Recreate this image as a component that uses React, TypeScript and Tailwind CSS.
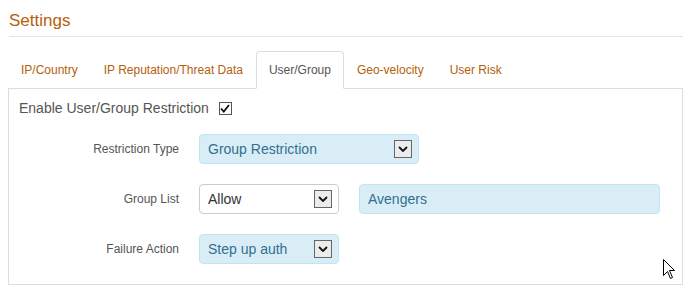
import React from 'react'

const tabs = ['IP/Country', 'IP Reputation/Threat Data', 'User/Group', 'Geo-velocity', 'User Risk']

function Arrow() {
  return (
    <span className="ml-auto flex h-[18px] w-[18px] items-center justify-center border border-[#666] bg-[#ececec]">
      <svg width="10" height="6" viewBox="0 0 10 6">
        <path d="M1 1 L5 5 L9 1" fill="none" stroke="#111" strokeWidth="1.8" />
      </svg>
    </span>
  )
}

function Select(props: { value: string; width: string; info?: boolean }) {
  return (
    <div
      className={`flex h-[30px] items-center rounded-[4px] border pl-2 pr-[6px] text-[14px] ${props.width} ${
        props.info ? 'border-[#bce8f1] bg-[#d9edf7] text-[#31708f]' : 'border-[#ccc] bg-white text-[#333]'
      }`}
    >
      <span>{props.value}</span>
      <Arrow />
    </div>
  )
}

function Row(props: { label: string; children: React.ReactNode }) {
  return (
    <div className="flex items-center">
      <div className="w-[160px] text-right text-[12px] text-[#555]">{props.label}</div>
      <div className="ml-[20px] flex items-center gap-[20px]">{props.children}</div>
    </div>
  )
}

export default function App() {
  return (
    <div className="relative h-[286px] w-[692px] bg-white pl-[8px] pr-[9px]" style={{ fontFamily: '"Liberation Sans", Arial, sans-serif' }}>
      <div className="ml-[1px] border-b border-[#e5e5e5] pb-[5px] pt-[11px] text-[17px] leading-[20px] text-[#b5600c]">
        Settings
      </div>

      <div className="mt-[14px] flex border-b border-[#ddd]">
        {tabs.map((t) => {
          const active = t === 'User/Group'
          return (
            <div
              key={t}
              className={`-mb-px flex h-[38px] items-center rounded-t-[4px] border px-[12px] text-[12px] ${
                active ? 'border-[#ddd] border-b-white bg-white text-[#555]' : 'border-transparent text-[#b5600c]'
              }`}
            >
              {t}
            </div>
          )
        })}
      </div>

      <div className="h-[196px] border-x border-b border-[#ddd] px-[10px] pt-[9px]">
        <div className="flex items-center text-[14px] leading-[20px] text-[#555]">
          Enable User/Group Restriction
          <span className="ml-[10px] flex h-[13px] w-[13px] items-center justify-center border border-[#555] bg-white">
            <svg width="10" height="9" viewBox="0 0 10 9">
              <path d="M1 4.5 L3.8 7.5 L9 1" fill="none" stroke="#111" strokeWidth="1.8" />
            </svg>
          </span>
        </div>

        <div className="mt-[16px] flex flex-col gap-[20px]">
          <Row label="Restriction Type">
            <Select value="Group Restriction" width="w-[220px]" info />
          </Row>
          <Row label="Group List">
            <Select value="Allow" width="w-[140px]" />
            <div className="flex h-[30px] w-[301px] items-center rounded-[4px] border border-[#bce8f1] bg-[#d9edf7] pl-2 text-[14px] text-[#31708f]">
              Avengers
            </div>
          </Row>
          <Row label="Failure Action">
            <Select value="Step up auth" width="w-[140px]" info />
          </Row>
        </div>
      </div>

      <svg className="absolute left-[663px] top-[259px]" width="13" height="21" viewBox="0 0 13 21">
        <path d="M0.5 0.5 L0.5 16.5 L4.5 12.5 L7.5 19.5 L9.5 18.5 L6.5 11.5 L11.5 11.5 Z" fill="white" stroke="black" strokeWidth="1" />
      </svg>
    </div>
  )
}
